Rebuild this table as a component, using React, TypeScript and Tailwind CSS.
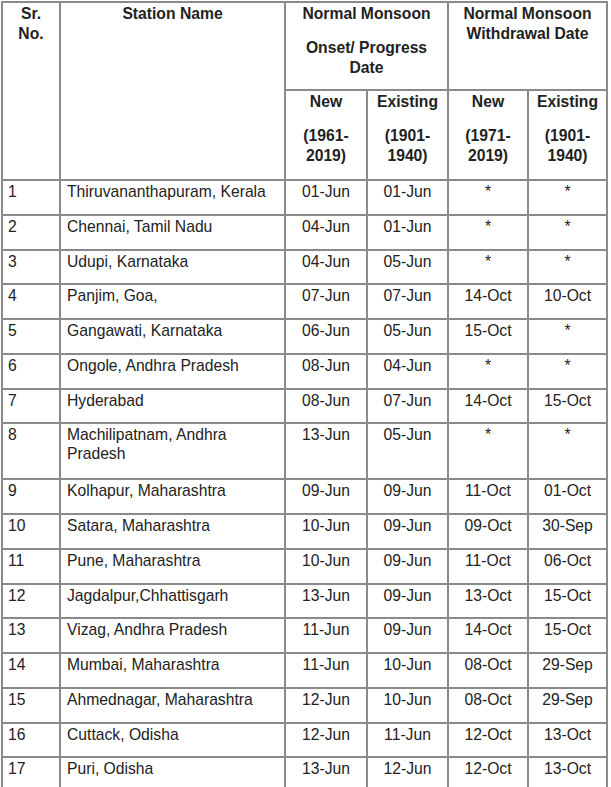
const rows: string[][] = [
  ["1", "Thiruvananthapuram, Kerala", "01-Jun", "01-Jun", "*", "*"],
  ["2", "Chennai, Tamil Nadu", "04-Jun", "01-Jun", "*", "*"],
  ["3", "Udupi, Karnataka", "04-Jun", "05-Jun", "*", "*"],
  ["4", "Panjim, Goa,", "07-Jun", "07-Jun", "14-Oct", "10-Oct"],
  ["5", "Gangawati, Karnataka", "06-Jun", "05-Jun", "15-Oct", "*"],
  ["6", "Ongole, Andhra Pradesh", "08-Jun", "04-Jun", "*", "*"],
  ["7", "Hyderabad", "08-Jun", "07-Jun", "14-Oct", "15-Oct"],
  ["8", "Machilipatnam, Andhra|Pradesh", "13-Jun", "05-Jun", "*", "*"],
  ["9", "Kolhapur, Maharashtra", "09-Jun", "09-Jun", "11-Oct", "01-Oct"],
  ["10", "Satara, Maharashtra", "10-Jun", "09-Jun", "09-Oct", "30-Sep"],
  ["11", "Pune, Maharashtra", "10-Jun", "09-Jun", "11-Oct", "06-Oct"],
  ["12", "Jagdalpur,Chhattisgarh", "13-Jun", "09-Jun", "13-Oct", "15-Oct"],
  ["13", "Vizag, Andhra Pradesh", "11-Jun", "09-Jun", "14-Oct", "15-Oct"],
  ["14", "Mumbai, Maharashtra", "11-Jun", "10-Jun", "08-Oct", "29-Sep"],
  ["15", "Ahmednagar, Maharashtra", "12-Jun", "10-Jun", "08-Oct", "29-Sep"],
  ["16", "Cuttack, Odisha", "12-Jun", "11-Jun", "12-Oct", "13-Oct"],
  ["17", "Puri, Odisha", "13-Jun", "12-Jun", "12-Oct", "13-Oct"],
];

const cell = "border-2 border-[#8a8a8a] align-top pt-px";

function SubHead({ top, a, b }: { top: string; a: string; b: string }) {
  return (
    <th className={`${cell} text-center font-bold`}>
      <div>{top}</div>
      <div className="mt-[14px]">{a}</div>
      <div>{b}</div>
    </th>
  );
}

export default function App() {
  return (
    <div className="min-h-screen bg-white text-[#222] font-['Liberation_Sans',Arial,sans-serif] text-[15.7px] overflow-hidden">
      <table className="ml-px mt-px border-collapse table-fixed w-[607px] leading-[19px]">
        <colgroup>
          <col className="w-[58px]" />
          <col className="w-[225px]" />
          <col className="w-[82px]" />
          <col className="w-[81px]" />
          <col className="w-[80px]" />
          <col className="w-[79px]" />
        </colgroup>
        <thead className="leading-[20px]">
          <tr className="h-[88px]">
            <th rowSpan={2} className={`${cell} text-center font-bold`}>
              <div>Sr.</div>
              <div>No.</div>
            </th>
            <th rowSpan={2} className={`${cell} text-center font-bold`}>
              Station Name
            </th>
            <th colSpan={2} className={`${cell} text-center font-bold`}>
              <div>Normal Monsoon</div>
              <div className="mt-[14px]">Onset/ Progress</div>
              <div>Date</div>
            </th>
            <th colSpan={2} className={`${cell} text-center font-bold`}>
              <div>Normal Monsoon</div>
              <div>Withdrawal Date</div>
            </th>
          </tr>
          <tr className="h-[90px]">
            <SubHead top="New" a="(1961-" b="2019)" />
            <SubHead top="Existing" a="(1901-" b="1940)" />
            <SubHead top="New" a="(1971-" b="2019)" />
            <SubHead top="Existing" a="(1901-" b="1940)" />
          </tr>
        </thead>
        <tbody>
          {rows.map((r) => (
            <tr key={r[0]} className={r[0] === "8" ? "h-[56px]" : "h-[34.75px]"}>
              <td className={`${cell} pl-[5px]`}>{r[0]}</td>
              <td className={`${cell} pl-[6px]`}>
                {r[1].split("|").map((line) => (
                  <div key={line}>{line}</div>
                ))}
              </td>
              <td className={`${cell} text-center`}>{r[2]}</td>
              <td className={`${cell} text-center`}>{r[3]}</td>
              <td className={`${cell} text-center`}>{r[4]}</td>
              <td className={`${cell} text-center`}>{r[5]}</td>
            </tr>
          ))}
        </tbody>
      </table>
    </div>
  );
}
